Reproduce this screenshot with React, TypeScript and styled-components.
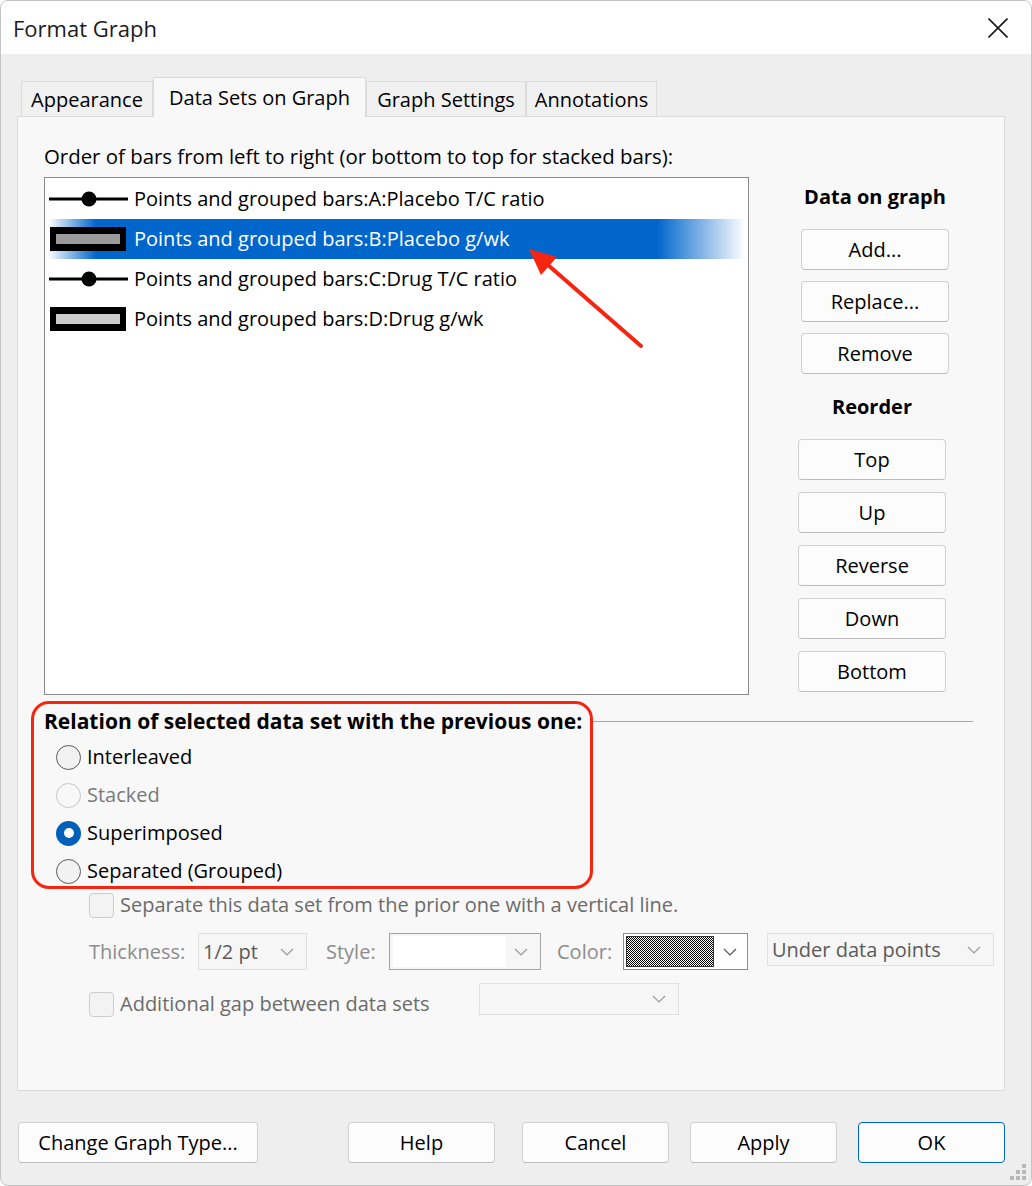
import React from 'react';
import styled, { createGlobalStyle } from 'styled-components';

const GlobalStyle = createGlobalStyle`
  html, body {
    margin: 0;
    padding: 0;
    background: #ffffff;
  }
  body {
    font-family: 'Open Sans', 'Noto Sans', sans-serif;
    font-size: 20px;
    line-height: 24px;
    color: #000000;
  }
  * {
    box-sizing: border-box;
  }
`;

const Window = styled.div`
  position: relative;
  width: 1032px;
  height: 1186px;
  display: flex;
  flex-direction: column;
  background: #eeeeee;
  border: 1px solid #c4c4c4;
  border-radius: 8px;
  overflow: hidden;
`;

const TitleBar = styled.div`
  flex: none;
  height: 53px;
  display: flex;
  align-items: center;
  justify-content: space-between;
  padding: 0 23px 0 12px;
  background: #ffffff;
  font-size: 22px;
  color: #1b1b1b;
`;

const CloseButton = styled.span`
  display: flex;
  width: 20px;
  height: 20px;
`;

const Body = styled.div`
  flex: 1;
  padding: 23px 26px 0 16px;
`;

const TabRow = styled.div`
  display: flex;
  align-items: flex-end;
  height: 40px;
  padding-left: 4px;
  margin-bottom: -1px;
  position: relative;
  z-index: 1;
`;

const Tab = styled.div<{ $active?: boolean; $w: number }>`
  width: ${(p) => p.$w}px;
  height: ${(p) => (p.$active ? 40 : 35)}px;
  margin-bottom: ${(p) => (p.$active ? 0 : 1)}px;
  display: flex;
  align-items: center;
  justify-content: center;
  padding-top: ${(p) => (p.$active ? 0 : 2)}px;
  border: 1px solid #dcdcdc;
  border-bottom: none;
  background: ${(p) => (p.$active ? '#f8f8f8' : '#f0f0f0')};
  white-space: nowrap;
`;

const Panel = styled.div`
  height: 975px;
  border: 1px solid #dcdcdc;
  background: #f8f8f8;
  padding: 27px 0 0 26px;
  display: flex;
  flex-direction: column;
`;

const PanelLabel = styled.div`
  font-size: 20.4px;
  white-space: nowrap;
`;

const Upper = styled.div`
  display: grid;
  grid-template-columns: 705px 1fr;
  margin-top: 9px;
`;

const ListBox = styled.div`
  height: 518px;
  border: 1px solid #8a8a8a;
  background: #ffffff;
  padding: 1px 3px;
`;

const ListRow = styled.div<{ $selected?: boolean }>`
  height: 40px;
  display: flex;
  align-items: center;
  gap: 6px;
  padding-left: 1px;
  white-space: nowrap;
  color: ${(p) => (p.$selected ? '#ffffff' : '#000000')};
  background: ${(p) =>
    p.$selected
      ? 'linear-gradient(90deg, #ffffff 0, #0066cc 48px, #0066cc calc(100% - 88px), #ffffff 100%)'
      : 'transparent'};
`;

const BarSwatch = styled.span<{ $fill: string }>`
  flex: none;
  width: 76px;
  height: 24px;
  margin-left: 1px;
  margin-right: 2px;
  border: 6px solid #000000;
  border-width: 7px 6px;
  background: ${(p) => p.$fill};
`;

const SideColumn = styled.div`
  display: flex;
  flex-direction: column;
`;

const ButtonGroup = styled.div<{ $left: number; $top: number }>`
  width: 148px;
  margin-left: ${(p) => p.$left}px;
  margin-top: ${(p) => p.$top}px;
  display: flex;
  flex-direction: column;
  align-items: center;
`;

const GroupTitle = styled.div`
  font-weight: 700;
  margin-bottom: 20px;
  white-space: nowrap;
`;

const Button = styled.button<{ $w?: number; $gap?: number; $primary?: boolean }>`
  width: ${(p) => p.$w ?? 148}px;
  height: 41px;
  margin-bottom: ${(p) => p.$gap ?? 0}px;
  border: 1px solid ${(p) => (p.$primary ? '#0067c0' : '#d0d0d0')};
  border-bottom-color: ${(p) => (p.$primary ? '#0067c0' : '#bdbdbd')};
  border-radius: 4px;
  background: #fcfcfc;
  font-family: inherit;
  font-size: 20px;
  color: #000000;
  padding: 0;
  white-space: nowrap;
`;

const RelationSection = styled.div`
  margin-top: 14px;
`;

const SectionHeader = styled.div`
  display: flex;
  align-items: center;
  height: 24px;
  margin-right: 31px;
`;

const SectionTitle = styled.span`
  font-weight: 700;
  font-size: 21px;
  white-space: nowrap;
`;

const Rule = styled.span`
  flex: 1;
  height: 1px;
  margin-left: 9px;
  background: #a8a8a8;
`;

const RadioList = styled.div`
  padding: 5px 0 0 12px;
`;

const RadioRow = styled.div<{ $disabled?: boolean }>`
  height: 38px;
  display: flex;
  align-items: center;
  gap: 6px;
  color: ${(p) => (p.$disabled ? '#7a7a7a' : '#000000')};
`;

const RadioCircle = styled.span<{ $state: 'off' | 'on' | 'disabled' }>`
  flex: none;
  width: 25px;
  height: 25px;
  border-radius: 50%;
  display: flex;
  align-items: center;
  justify-content: center;
  border: ${(p) =>
    p.$state === 'on' ? 'none' : p.$state === 'disabled' ? '1.5px solid #c6c6c6' : '1.5px solid #5a5a5a'};
  background: ${(p) => (p.$state === 'on' ? '#005fb8' : p.$state === 'disabled' ? '#f8f8f8' : '#f2f2f2')};
  &::after {
    content: '';
    display: ${(p) => (p.$state === 'on' ? 'block' : 'none')};
    width: 10px;
    height: 10px;
    border-radius: 50%;
    background: #ffffff;
  }
`;

const CheckRow = styled.div<{ $top: number }>`
  display: flex;
  align-items: center;
  height: 30px;
  padding-left: 45px;
  margin-top: ${(p) => p.$top}px;
`;

const CheckLabel = styled.label<{ $w?: number }>`
  display: flex;
  align-items: center;
  gap: 6px;
  width: ${(p) => (p.$w ? `${p.$w}px` : 'auto')};
  color: #6b6b6b;
  white-space: nowrap;
`;

const CheckBox = styled.span`
  flex: none;
  width: 25px;
  height: 25px;
  border-radius: 4px;
  border: 1px solid #cdcdcd;
  background: #f3f3f3;
`;

const LineRow = styled.div`
  display: flex;
  align-items: center;
  height: 37px;
  padding-left: 45px;
  margin-top: 13px;
`;

const FieldLabel = styled.span<{ $w: number; $pl?: number }>`
  flex: none;
  width: ${(p) => p.$w}px;
  padding-left: ${(p) => p.$pl ?? 0}px;
  color: #8c8c8c;
  white-space: nowrap;
`;

const Select = styled.div<{ $w: number; $h?: number; $ml?: number; $mt?: number; $active?: boolean }>`
  flex: none;
  width: ${(p) => p.$w}px;
  height: ${(p) => p.$h ?? 37}px;
  margin-left: ${(p) => p.$ml ?? 0}px;
  margin-top: ${(p) => p.$mt ?? 0}px;
  display: flex;
  align-items: center;
  justify-content: space-between;
  padding: 0 12px 0 3px;
  border: 1px solid ${(p) => (p.$active ? '#a4a4a4' : '#e0e0e0')};
  background: #f6f6f6;
  color: #5a5a5a;
  white-space: nowrap;
`;

const SelectText = styled.span`
  padding-left: 1px;
`;

const WhiteWell = styled.span`
  width: 113px;
  height: 31px;
  background: #ffffff;
`;

const ColorSelect = styled.div`
  flex: none;
  width: 125px;
  height: 37px;
  display: flex;
  align-items: center;
  padding: 2px;
  border: 1px solid #8f8f8f;
  background: #ffffff;
`;

const ChevronWrap = styled.span`
  flex: 1;
  display: flex;
  justify-content: center;
`;

const Footer = styled.div`
  display: flex;
  align-items: center;
  margin-top: 31px;
`;

const FooterButton = styled(Button)<{ $ml: number }>`
  margin-left: ${(p) => p.$ml}px;
`;

const RedBox = styled.div`
  position: absolute;
  left: 30px;
  top: 700px;
  width: 562px;
  height: 188px;
  border: 3.5px solid #f7250f;
  border-radius: 18px;
  pointer-events: none;
`;

const ArrowLayer = styled.svg`
  position: absolute;
  left: 0;
  top: 0;
  pointer-events: none;
`;

const Grip = styled.svg`
  position: absolute;
  right: 3px;
  bottom: 3px;
`;

const Chevron = ({ color = '#9a9a9a' }: { color?: string }) => (
  <svg width="14" height="8" viewBox="0 0 14 8">
    <polyline points="1,1 7,7 13,1" fill="none" stroke={color} strokeWidth="1.2" />
  </svg>
);

// dithered "pattern" swatch shown in the colour picker
const CheckerSwatch = () => (
  <svg width="88" height="31" viewBox="0 0 88 31" shapeRendering="crispEdges" style={{ flex: 'none' }}>
    <defs>
      <pattern id="dither" width="2" height="2" patternUnits="userSpaceOnUse">
        <rect width="2" height="2" fill="#ffffff" />
        <rect width="1" height="1" fill="#000000" />
        <rect x="1" y="1" width="1" height="1" fill="#000000" />
      </pattern>
    </defs>
    <rect x="0" y="0" width="88" height="31" fill="url(#dither)" />
    <rect x="0.5" y="0.5" width="87" height="30" fill="none" stroke="#333" />
  </svg>
);

const LineDot = () => (
  <svg width="79" height="16" viewBox="0 0 79 16" style={{ flex: 'none' }}>
    <line x1="0" y1="8" x2="79" y2="8" stroke="#000" strokeWidth="3" />
    <circle cx="40" cy="8" r="7.5" fill="#000" />
  </svg>
);

const dataSets = [
  { kind: 'line', label: 'Points and grouped bars:A:Placebo T/C ratio' },
  { kind: 'bar', fill: '#9b9b9b', label: 'Points and grouped bars:B:Placebo g/wk', selected: true },
  { kind: 'line', label: 'Points and grouped bars:C:Drug T/C ratio' },
  { kind: 'bar', fill: '#cccccc', label: 'Points and grouped bars:D:Drug g/wk' },
];

const relations: { label: string; state: 'off' | 'on' | 'disabled' }[] = [
  { label: 'Interleaved', state: 'off' },
  { label: 'Stacked', state: 'disabled' },
  { label: 'Superimposed', state: 'on' },
  { label: 'Separated (Grouped)', state: 'off' },
];

export default function App() {
  return (
    <>
      <GlobalStyle />
      <Window>
        <TitleBar>
          Format Graph
          <CloseButton>
            <svg width="20" height="20" viewBox="0 0 20 20">
              <path d="M0.5 0.5 L19.5 19.5 M19.5 0.5 L0.5 19.5" stroke="#1a1a1a" strokeWidth="1.6" />
            </svg>
          </CloseButton>
        </TitleBar>
        <Body>
          <TabRow>
            <Tab $w={132}>Appearance</Tab>
            <Tab $w={213} $active>
              Data Sets on Graph
            </Tab>
            <Tab $w={160}>Graph Settings</Tab>
            <Tab $w={131}>Annotations</Tab>
          </TabRow>
          <Panel>
            <PanelLabel>Order of bars from left to right (or bottom to top for stacked bars):</PanelLabel>
            <Upper>
              <ListBox>
                {dataSets.map((d) => (
                  <ListRow key={d.label} $selected={d.selected}>
                    {d.kind === 'line' ? <LineDot /> : <BarSwatch $fill={d.fill!} />}
                    {d.label}
                  </ListRow>
                ))}
              </ListBox>
              <SideColumn>
                <ButtonGroup $left={52} $top={8}>
                  <GroupTitle>Data on graph</GroupTitle>
                  <Button $gap={11}>Add...</Button>
                  <Button $gap={11}>Replace...</Button>
                  <Button>Remove</Button>
                </ButtonGroup>
                <ButtonGroup $left={49} $top={21}>
                  <GroupTitle>Reorder</GroupTitle>
                  <Button $gap={12}>Top</Button>
                  <Button $gap={12}>Up</Button>
                  <Button $gap={12}>Reverse</Button>
                  <Button $gap={12}>Down</Button>
                  <Button>Bottom</Button>
                </ButtonGroup>
              </SideColumn>
            </Upper>
            <RelationSection>
              <SectionHeader>
                <SectionTitle>Relation of selected data set with the previous one:</SectionTitle>
                <Rule />
              </SectionHeader>
              <RadioList>
                {relations.map((r) => (
                  <RadioRow key={r.label} $disabled={r.state === 'disabled'}>
                    <RadioCircle $state={r.state} />
                    {r.label}
                  </RadioRow>
                ))}
              </RadioList>
            </RelationSection>
            <CheckRow $top={0}>
              <CheckLabel>
                <CheckBox />
                Separate this data set from the prior one with a vertical line.
              </CheckLabel>
            </CheckRow>
            <LineRow>
              <FieldLabel $w={109}>Thickness:</FieldLabel>
              <Select $w={109}>
                <SelectText>1/2 pt</SelectText>
                <Chevron />
              </Select>
              <FieldLabel $w={82} $pl={19}>
                Style:
              </FieldLabel>
              <Select $w={152} $active>
                <WhiteWell />
                <Chevron />
              </Select>
              <FieldLabel $w={82} $pl={16}>
                Color:
              </FieldLabel>
              <ColorSelect>
                <CheckerSwatch />
                <ChevronWrap>
                  <Chevron color="#555" />
                </ChevronWrap>
              </ColorSelect>
              <Select $w={227} $h={33} $ml={19} $mt={-4}>
                <SelectText>Under data points</SelectText>
                <Chevron />
              </Select>
            </LineRow>
            <CheckRow $top={19}>
              <CheckLabel $w={390}>
                <CheckBox />
                Additional gap between data sets
              </CheckLabel>
              <Select $w={200} $h={32} $mt={-10}>
                <span />
                <Chevron />
              </Select>
            </CheckRow>
          </Panel>
          <Footer>
            <FooterButton $ml={1} $w={240}>
              Change Graph Type...
            </FooterButton>
            <FooterButton $ml={90} $w={147}>
              Help
            </FooterButton>
            <FooterButton $ml={27} $w={147}>
              Cancel
            </FooterButton>
            <FooterButton $ml={21} $w={147}>
              Apply
            </FooterButton>
            <FooterButton $ml={21} $w={147} $primary>
              OK
            </FooterButton>
          </Footer>
        </Body>
        <RedBox />
        <ArrowLayer width="1030" height="1184" viewBox="1 1 1030 1184">
          <line x1="641" y1="346" x2="548" y2="265" stroke="#f7250f" strokeWidth="4" strokeLinecap="round" />
          <polygon points="529,249 557,257 541,275" fill="#f7250f" />
        </ArrowLayer>
        <Grip width="20" height="20" viewBox="0 0 20 20">
          <g fill="#b8b8b8">
            <rect x="14" y="2" width="4" height="4" />
            <rect x="8" y="8" width="4" height="4" />
            <rect x="14" y="8" width="4" height="4" />
            <rect x="2" y="14" width="4" height="4" />
            <rect x="8" y="14" width="4" height="4" />
            <rect x="14" y="14" width="4" height="4" />
          </g>
        </Grip>
      </Window>
    </>
  );
}
